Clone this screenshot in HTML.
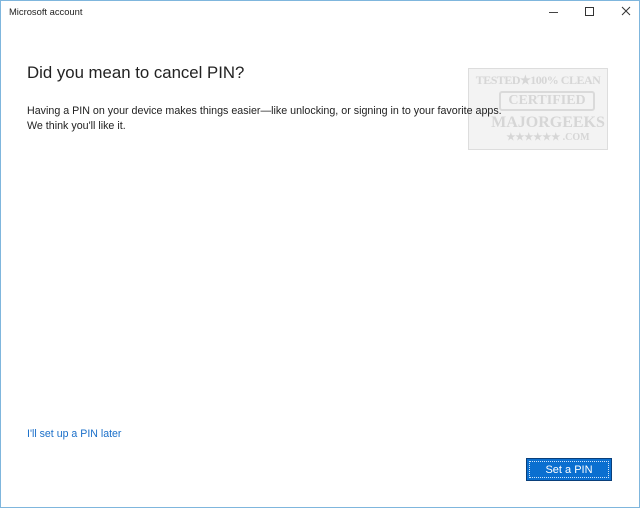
<!DOCTYPE html>
<html><head><meta charset="utf-8"><style>
html,body{margin:0;padding:0}
body{width:640px;height:508px;position:relative;background:#fff;font-family:"Liberation Sans",sans-serif;overflow:hidden}
.frame{position:absolute;left:0;top:0;width:638px;height:506px;border:1px solid #7fb6dd}
.t{position:absolute;white-space:nowrap}
</style></head><body>
<div class="frame"></div>
<div class="t" style="left:9px;top:6px;font-size:9.4px;color:#222">Microsoft account</div>
<div style="position:absolute;left:549px;top:12px;width:9px;height:1px;background:#444"></div>
<div style="position:absolute;left:585px;top:7px;width:7px;height:7px;border:1px solid #333"></div>
<svg style="position:absolute;left:621px;top:6px" width="10" height="10"><path d="M1 1L9 9M9 1L1 9" stroke="#333" stroke-width="1"/></svg>
<div style="position:absolute;left:468px;top:68px;width:138px;height:80px;background:#f3f3f3;border:1px solid #ddd;color:#d6d6d6;font-family:'Liberation Serif',serif;font-weight:bold;text-align:center">
<div style="font-size:12px;margin-top:4px;letter-spacing:-0.5px">TESTED★100% CLEAN</div>
<div style="font-size:14px;margin:3px 12px 0 30px;border:2px solid #dadada;border-radius:3px">CERTIFIED</div>
<div style="font-size:16px;margin-top:3px;padding-left:20px">MAJORGEEKS</div>
<div style="font-size:10px;padding-left:20px">★★★★★★ .COM</div>
</div>
<div class="t" style="left:27px;top:63px;font-size:16.8px;color:#222">Did you mean to cancel PIN?</div>
<div class="t" style="left:27px;top:104px;font-size:10.7px;color:#222;line-height:15px">Having a PIN on your device makes things easier—like unlocking, or signing in to your favorite apps.<br>We think you'll like it.</div>
<div class="t" style="left:27px;top:428px;font-size:10.6px;color:#1a6fc9">I'll set up a PIN later</div>
<div style="position:absolute;left:526px;top:458px;width:86px;height:23px;background:#0a6fd0;border:1px solid #0a3f7a;box-sizing:border-box">
<div style="position:absolute;left:2px;top:2px;right:2px;bottom:2px;border:1px dotted #cfe3f7"></div>
<div class="t" style="left:0;right:0;top:5px;text-align:center;font-size:11px;color:#fff">Set a PIN</div>
</div>
</body></html>
